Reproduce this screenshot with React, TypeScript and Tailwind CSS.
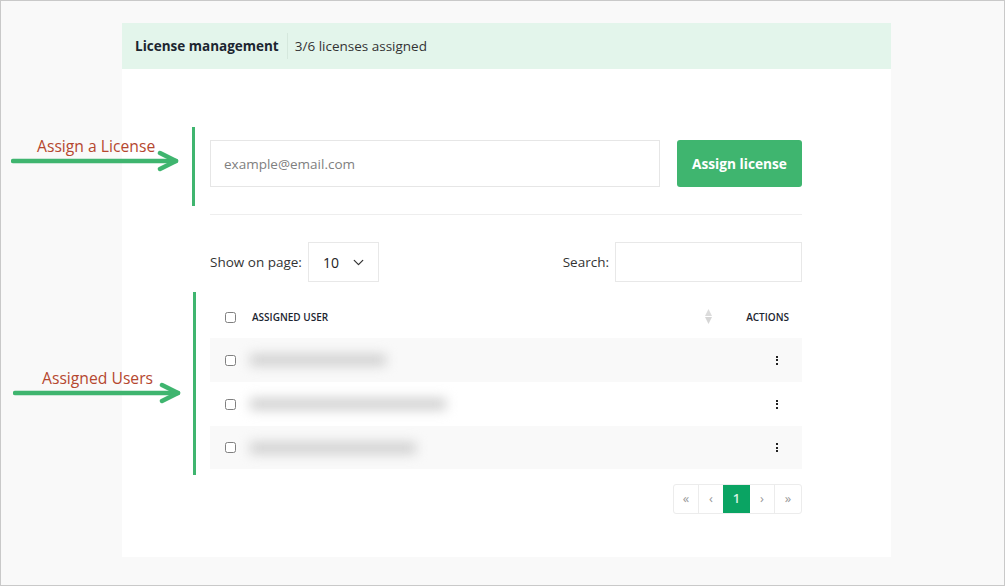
import React from "react";
import { ChevronDown } from "lucide-react";

const users = ["w-[136px]", "w-[196px]", "w-[166px]"];

function Dots() {
  return (
    <div className="flex flex-col gap-[1.5px] items-center">
      <span className="w-[2px] h-[2px] bg-[#222] block" />
      <span className="w-[2px] h-[2px] bg-[#222] block" />
      <span className="w-[2px] h-[2px] bg-[#222] block" />
    </div>
  );
}

function Check() {
  return <span className="block w-[9px] h-[9px] box-content border border-[#808080] rounded-[2.5px] bg-white" />;
}

function Arrow({ className }: { className: string }) {
  return (
    <svg className={`absolute ${className}`} width="174" height="22" viewBox="0 0 174 22" fill="none">
      <path d="M2 11H165" stroke="#3fb56f" strokeWidth="4.5" strokeLinecap="round" />
      <path d="M149 3L165 11L149 19" stroke="#3fb56f" strokeWidth="4.5" strokeLinecap="round" strokeLinejoin="round" />
    </svg>
  );
}

export default function App() {
  return (
    <div className="relative w-[1005px] h-[586px] overflow-hidden border border-[#c9c9c9] bg-[#f9f9f9] font-['Open_Sans',sans-serif] text-[#333]">
      <div className="ml-[121px] mt-[22px] w-[769px] h-[534px] bg-white">
        {/* Header */}
        <div className="h-[46px] bg-[#e3f5eb] flex items-center pl-[13px] text-[13.5px]">
          <span className="font-bold text-[#1c2530] pr-[8px] border-r border-[#d5e8dd] leading-[26px]">License management</span>
          <span className="pl-[7px] text-[#333]">3/6 licenses assigned</span>
        </div>

        <div className="pl-[88px] w-[680px]">
          {/* Assign */}
          <div className="flex gap-[17px] pt-[71px] pb-[27px] border-b border-[#eeeeee]">
            <div className="w-[450px] h-[47px] border border-[#e6e6e6] flex items-center pl-[13px] pt-[1px] text-[13.5px] text-[#808080]">
              example@email.com
            </div>
            <button className="w-[125px] h-[47px] pt-[1px] rounded-[3px] bg-[#3fb56f] text-white text-[13.7px] font-bold">
              Assign license
            </button>
          </div>

          {/* Filters */}
          <div className="flex items-center justify-between pt-[27px] text-[13.5px]">
            <div className="flex items-center gap-[6px]">
              <span>Show on page:</span>
              <div className="w-[71px] h-[40px] border border-[#e8e8e8] flex items-center pl-[14px] gap-[11px]">
                <span className="text-[#222] text-[14px]">10</span>
                <ChevronDown size={17} strokeWidth={1.75} className="text-[#333]" />
              </div>
            </div>
            <div className="flex items-center gap-[6px]">
              <span className="pt-[1px]">Search:</span>
              <div className="w-[187px] h-[40px] border border-[#e8e8e8]" />
            </div>
          </div>

          {/* Table */}
          <div className="mt-[13px]">
            <div className="h-[43px] flex items-center pl-[15px] pr-[13px] pt-[2px] text-[10px] font-semibold text-[#1c2530]">
              <Check />
              <span className="ml-[16px] flex-1">ASSIGNED USER</span>
              <svg width="7" height="15" viewBox="0 0 7 15" className="mr-[34px] -mt-[2px]">
                <path d="M3.5 0L7 7H0Z" fill="#dcdcdc" />
                <path d="M3.5 15L7 8H0Z" fill="#d6d6d6" />
              </svg>
              <span>ACTIONS</span>
            </div>
            {users.map((w, i) => (
              <div key={w} className={`flex items-center pl-[15px] pr-[24px] ${i === 2 ? "h-[43px]" : "h-[44px]"} ${i % 2 === 0 ? "bg-[#f9f9f9]" : "bg-white"}`}>
                <Check />
                <div className="flex-1 pl-[14px]">
                  <div className={`${w} h-[12px] bg-[#d0d0d0] blur-[6px]`} />
                </div>
                <Dots />
              </div>
            ))}
          </div>

          {/* Pagination */}
          <div className="flex justify-end mt-[15px]">
            <div className="flex h-[30px] border border-[#ececec] rounded-[3px] text-[#999] text-[13px]">
              <span className="w-[25px] flex items-center justify-center border-r border-[#ececec]">«</span>
              <span className="w-[24px] flex items-center justify-center">‹</span>
              <span className="w-[27px] flex items-center justify-center bg-[#0aa463] text-[#d8f2e4] font-semibold text-[13px]">1</span>
              <span className="w-[25px] flex items-center justify-center border-r border-[#ececec]">›</span>
              <span className="w-[26px] flex items-center justify-center">»</span>
            </div>
          </div>
        </div>
      </div>

      {/* Annotations */}
      <span className="absolute left-[36px] top-[134px] text-[15.7px] text-[#b5472f]">Assign a License</span>
      <Arrow className="left-[10px] top-[149px]" />
      <div className="absolute left-[191px] top-[126px] w-[3px] h-[79px] bg-[#3fb56f]" />

      <span className="absolute left-[41px] top-[366px] text-[15.7px] text-[#b5472f]">Assigned Users</span>
      <Arrow className="left-[12px] top-[381px]" />
      <div className="absolute left-[192px] top-[291px] w-[3px] h-[183px] bg-[#3fb56f]" />
    </div>
  );
}
